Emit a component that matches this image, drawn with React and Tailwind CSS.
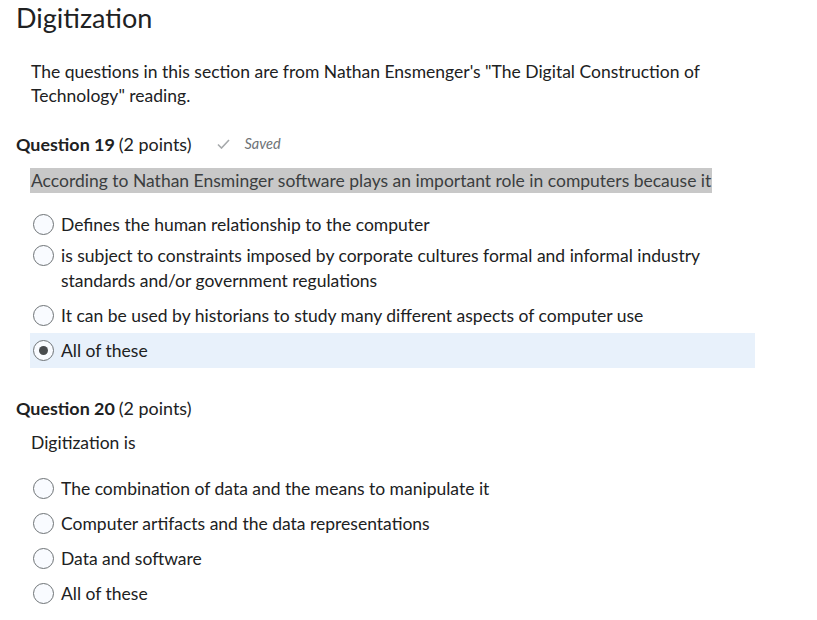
import React from "react";

const q19 = [
  { id: "a", text: "Defines the human relationship to the computer" },
  {
    id: "b",
    text: "is subject to constraints imposed by corporate cultures formal and informal industry standards and/or government regulations",
    wrap: true,
  },
  { id: "c", text: "It can be used by historians to study many different aspects of computer use" },
  { id: "d", text: "All of these", checked: true },
];

const q20 = [
  { id: "a", text: "The combination of data and the means to manipulate it" },
  { id: "b", text: "Computer artifacts and the data representations" },
  { id: "c", text: "Data and software" },
  { id: "d", text: "All of these" },
];

function Radio({ checked }) {
  return (
    <span className="mt-[2px] flex h-[21px] w-[21px] shrink-0 items-center justify-center rounded-full border border-[#6e7376] bg-[#f9fbff]">
      {checked && <span className="h-[9px] w-[9px] rounded-full bg-[#494c4e]" />}
    </span>
  );
}

function Option({ text, checked, wrap }) {
  return (
    <label
      className={`flex w-[725px] items-start gap-[7px] pl-[3px] pr-[40px] leading-[25px] ${
        wrap ? "pt-[1px] pb-[5px]" : "py-[5px]"
      } ${checked ? "bg-[#e8f1fb]" : ""}`}
    >
      <Radio checked={checked} />
      <span>{text}</span>
    </label>
  );
}

function Header({ num, saved }) {
  return (
    <div className="flex items-center text-[17.9px] leading-6">
      <span className="font-bold">Question {num}</span>
      <span className="ml-1">(2 points)</span>
      {saved && (
        <span className="ml-[26px] flex items-center gap-[14px] text-[14.5px] italic text-[#6e7376]">
          <svg width="13" height="10" viewBox="0 0 13 10" fill="none">
            <path d="M1 5.5 L4.5 9 L12 1" stroke="#a6a9ab" strokeWidth="1.6" />
          </svg>
          Saved
        </span>
      )}
    </div>
  );
}

export default function App() {
  return (
    <div
      className="min-h-[620px] bg-white pl-4 text-[17.5px] text-[#202122]"
      style={{ fontFamily: "Lato, 'Noto Sans', sans-serif" }}
    >
      <h1 className="text-[27px] leading-9">Digitization</h1>

      <p className="mt-6 w-[700px] pl-[15px] leading-6">
        The questions in this section are from Nathan Ensmenger's "The Digital Construction of
        Technology" reading.
      </p>

      <div className="mt-6">
        <Header num={19} saved />
        <div className="mt-3 pl-[14px]">
          <span className="inline-block bg-[#c8c8c8] pl-[1px] pr-[1px] leading-[25px] text-[#3b3e40]">
            According to Nathan Ensminger software plays an important role in computers because it
          </span>
        </div>
        <div className="mt-[13px] pl-[14px]">
          {q19.map((o) => (
            <Option key={o.id} text={o.text} checked={o.checked} wrap={o.wrap} />
          ))}
        </div>
      </div>

      <div className="mt-[28px]">
        <Header num={20} />
        <p className="mt-[11px] pl-[15px] leading-6">Digitization is</p>
        <div className="mt-4 pl-[14px]">
          {q20.map((o) => (
            <Option key={o.id} text={o.text} />
          ))}
        </div>
      </div>
    </div>
  );
}
